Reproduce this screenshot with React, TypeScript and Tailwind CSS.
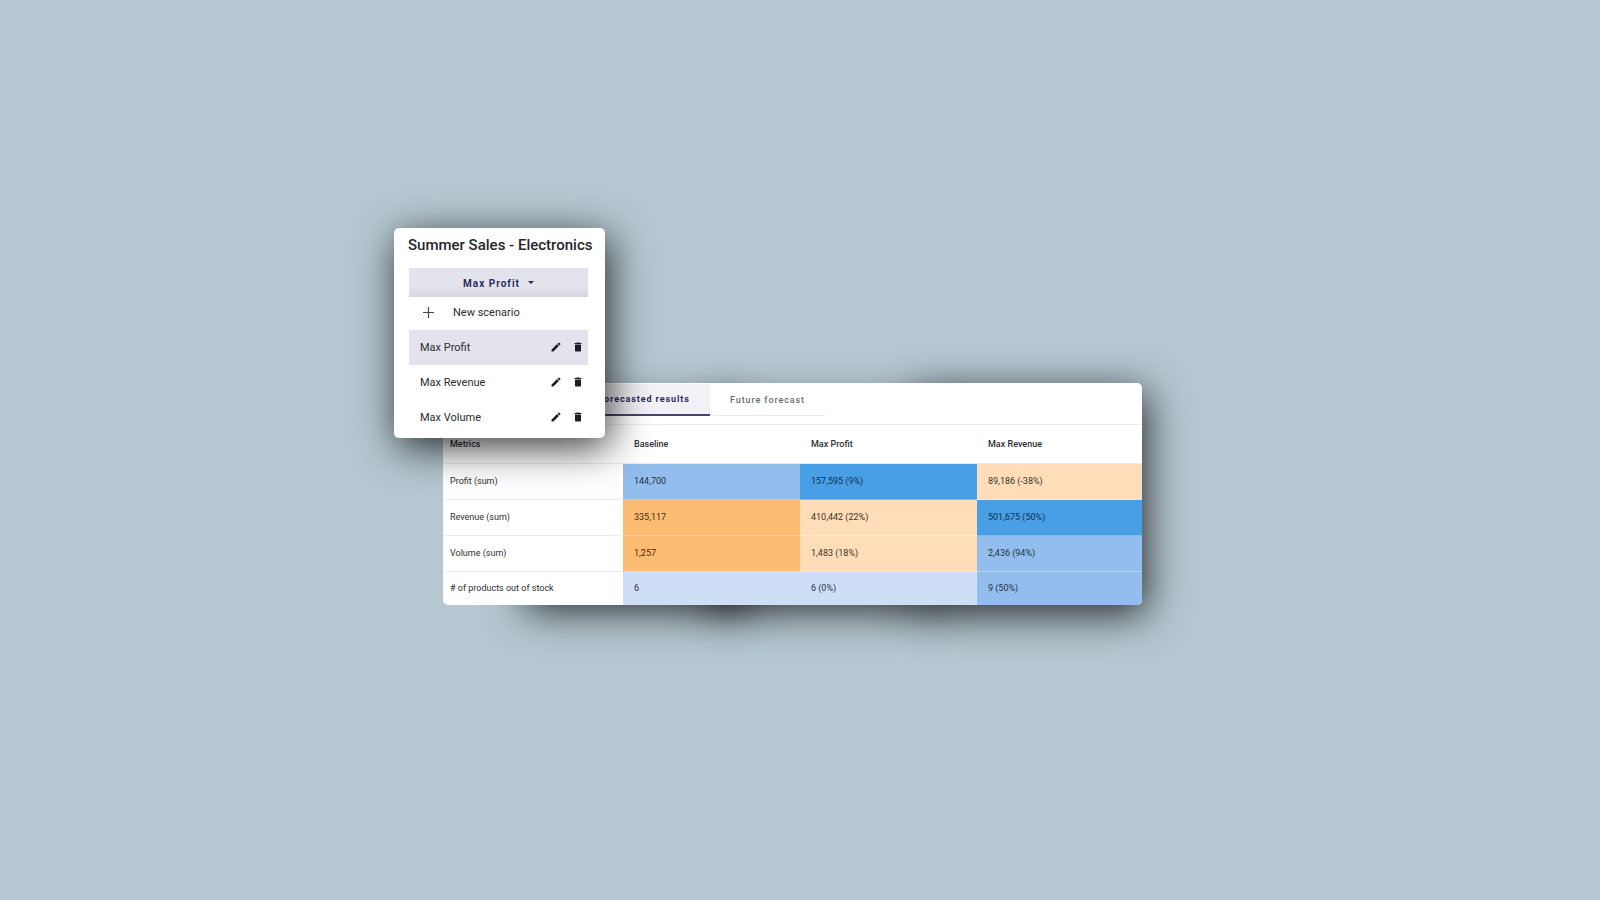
import { ReactNode } from "react";

type Tone = "mid" | "strong" | "pale" | "orange" | "peach";

const tones: Record<Tone, string> = {
  mid: "bg-[#93bdec] text-[#22324a]",
  strong: "bg-[#489fe6] text-[#10304f]",
  pale: "bg-[#cddef6] text-[#2c3440]",
  orange: "bg-[#fdbc73] text-[#3d2c18]",
  peach: "bg-[#feddb8] text-[#3d342b]",
};

const columns = ["Baseline", "Max Profit", "Max Revenue"];

const rows: { label: string; cells: [string, Tone][] }[] = [
  { label: "Profit (sum)", cells: [["144,700", "mid"], ["157,595 (9%)", "strong"], ["89,186 (-38%)", "peach"]] },
  { label: "Revenue (sum)", cells: [["335,117", "orange"], ["410,442 (22%)", "peach"], ["501,675 (50%)", "strong"]] },
  { label: "Volume (sum)", cells: [["1,257", "orange"], ["1,483 (18%)", "peach"], ["2,436 (94%)", "mid"]] },
  { label: "# of products out of stock", cells: [["6", "pale"], ["6 (0%)", "pale"], ["9 (50%)", "mid"]] },
];

const scenarios = ["Max Profit", "Max Revenue", "Max Volume"];

function Icon({ children }: { children: ReactNode }) {
  return (
    <svg viewBox="0 0 24 24" className="size-3 fill-[#1c1c22]" aria-hidden="true">
      {children}
    </svg>
  );
}

function ScenarioPanel() {
  return (
    <section className="z-10 w-[211px] self-start rounded-[5px] bg-white px-[14px] pt-2 pb-[3px] shadow-[4px_9px_40px_rgba(0,0,0,0.8)] [grid-area:1/1]">
      <h1 className="text-[15px] leading-[18px] font-medium whitespace-nowrap text-[#26262a]">
        Summer Sales - Electronics
      </h1>
      <div className="mt-[14px] mr-[3px] ml-px">
        <button
          type="button"
          className="flex h-[29px] w-full items-center justify-center gap-2 bg-linear-to-b from-[#e3e3ed] from-60% to-[#d6d6e0] text-[10px] font-bold tracking-widest text-[#2b2e60]"
        >
          <span className="pt-px">Max Profit</span>
          <svg viewBox="0 0 10 5" className="h-[3px] w-[6px] fill-[#2a2a5c]" aria-hidden="true">
            <path d="M0 0h10L5 5z" />
          </svg>
        </button>
        <button type="button" className="flex h-[33px] w-full items-center gap-[19px] pb-[3px] pl-[14px] text-[11px] text-[#2b2b2f]">
          <svg viewBox="0 0 11 11" className="size-[11px] stroke-[#4a4a4e]" aria-hidden="true">
            <path d="M5.5 0v11M0 5.5h11" strokeWidth="1.2" />
          </svg>
          <span className="pt-0.5">New scenario</span>
        </button>
        <ul>
          {scenarios.map((name, i) => (
            <li
              key={name}
              className={`flex h-[35px] items-center pr-1 pb-px pl-[11px] text-[11px] text-[#2b2b2f] ${i === 0 ? "bg-[#e3e3ed]" : ""}`}
            >
              <span className="grow pt-0.5">{name}</span>
              <button type="button" aria-label={`Edit ${name}`} className="mr-[10px]">
                <Icon>
                  <path d="M3 17.25V21h3.75L17.81 9.94l-3.75-3.75L3 17.25zM20.71 7.04a1 1 0 0 0 0-1.41l-2.34-2.34a1 1 0 0 0-1.41 0l-1.83 1.83 3.75 3.75 1.83-1.83z" />
                </Icon>
              </button>
              <button type="button" aria-label={`Delete ${name}`}>
                <Icon>
                  <path d="M6 19c0 1.1.9 2 2 2h8c1.100 0 2-.9 2-2V7H6v12zM19 4h-3.500l-1-1h-5l-1 1H5v2h14V4z" />
                </Icon>
              </button>
            </li>
          ))}
        </ul>
      </div>
    </section>
  );
}

function ResultsPanel() {
  return (
    <section className="relative overflow-hidden rounded-[5px] bg-white">
      <div className="flex h-[42px] items-start border-b border-[#ededf0] pt-px pl-[135px]">
        <button
          type="button"
          className="h-8 w-[132px] border-b-2 border-[#45456f] bg-[#f1f1f6] pt-0.5 text-[9px] font-bold tracking-widest whitespace-nowrap text-[#2b2e60]"
        >
          Forecasted results
        </button>
        <button
          type="button"
          className="h-8 w-[115px] border-b border-[#ededf0] pt-0.5 text-[9px] font-medium tracking-widest whitespace-nowrap text-[#6b6b70]"
        >
          Future forecast
        </button>
      </div>
      <table className="w-full table-fixed border-separate border-spacing-0 text-left text-[9px] text-[#2f2f33]">
        <colgroup>
          <col className="w-[180px]" />
          <col className="w-[177px]" />
          <col className="w-[177px]" />
          <col />
        </colgroup>
        <thead>
          <tr className="h-[39px]">
            <th className="border-b border-[#ededf0] pt-px pl-[7px] font-medium">Metrics</th>
            {columns.map((c) => (
              <th key={c} className="border-b border-[#ededf0] pt-px pl-[11px] font-medium">{c}</th>
            ))}
          </tr>
        </thead>
        <tbody>
          {rows.map((row) => (
            <tr key={row.label} className="group h-9 last:h-[33px]">
              <th scope="row" className="border-b border-[#ededf0] pt-px pl-[7px] font-normal group-last:border-b-0">
                {row.label}
              </th>
              {row.cells.map(([value, tone], i) => (
                <td
                  key={i}
                  className={`border-b border-white/30 pt-px pl-[11px] group-last:border-b-0 ${tones[tone]}`}
                >
                  {value}
                </td>
              ))}
            </tr>
          ))}
        </tbody>
      </table>
    </section>
  );
}

export default function App() {
  return (
    <main className="flex min-h-screen items-center justify-center bg-[#b5c7d0] pr-16 pb-[67px] font-[Roboto,sans-serif]">
      <div className="grid w-full max-w-[748px]">
        <div className="relative mt-[155px] ml-[49px] [grid-area:1/1]">
          <span className="absolute top-[14px] bottom-1 left-[78px] w-[220px] rounded-[5px] shadow-[4px_9px_40px_rgba(0,0,0,0.8)]" />
          <span className="absolute top-[14px] bottom-1 left-[264px] w-[220px] rounded-[5px] shadow-[4px_9px_40px_rgba(0,0,0,0.8)]" />
          <span className="absolute top-0 right-0 bottom-0 w-[230px] rounded-[5px] shadow-[4px_9px_40px_rgba(0,0,0,0.8)]" />
          <ResultsPanel />
        </div>
        <ScenarioPanel />
      </div>
    </main>
  );
}
